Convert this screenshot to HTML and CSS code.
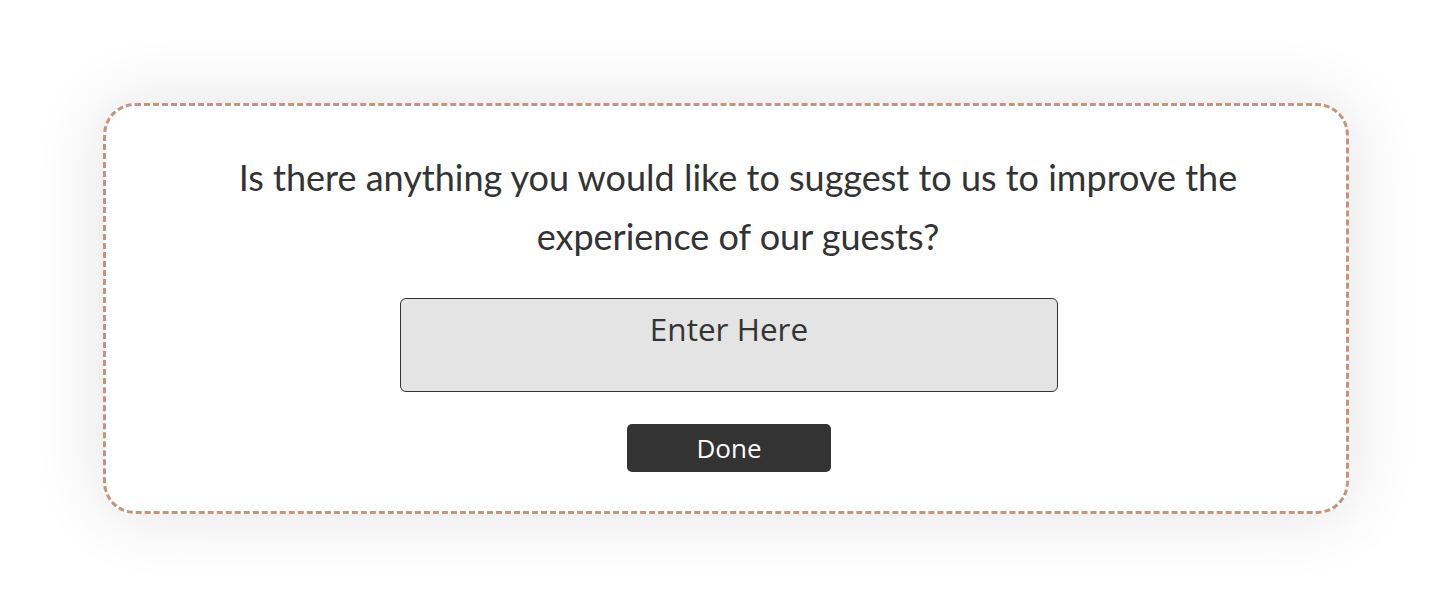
FILE: index.html
```html
<!DOCTYPE html>
<html lang="en">
<head>
<meta charset="utf-8">
<title>Suggestion</title>
<link rel="stylesheet" href="styles.css">
</head>
<body>
<main class="page">
  <section class="card">
    <h1 class="question">Is there anything you would like to suggest to us to improve the experience of our guests?</h1>
    <div class="field">
      <span class="placeholder">Enter Here</span>
    </div>
    <button class="done" type="button">Done</button>
  </section>
</main>
</body>
</html>
```

FILE: styles.css
```css
html, body {
  margin: 0;
  padding: 0;
  background: #ffffff;
}

.page {
  height: 616px;
  display: flex;
  align-items: center;
  justify-content: center;
}

.card {
  box-sizing: border-box;
  width: 1246px;
  height: 411px;
  border: 3px dashed #c4957c;
  border-radius: 32px;
  background: #ffffff;
  box-shadow: 0 0 70px rgba(0, 0, 0, 0.12);
  display: flex;
  flex-direction: column;
  align-items: center;
  padding-top: 42px;
  padding-left: 6px;
}

.question {
  margin: 0;
  max-width: 1040px;
  padding-left: 18px;
  text-align: center;
  font-family: Lato, "Open Sans", sans-serif;
  font-weight: 400;
  font-size: 36px;
  line-height: 59px;
  color: #333333;
}

.field {
  box-sizing: border-box;
  margin-top: 32px;
  width: 658px;
  height: 94px;
  background: #e4e4e4;
  border: 1px solid #333333;
  border-radius: 6px;
  display: flex;
  justify-content: center;
  padding-top: 9px;
}

.placeholder {
  font-family: "Open Sans", sans-serif;
  font-size: 31.5px;
  line-height: 42px;
  color: #333333;
}

.done {
  margin-top: 32px;
  width: 204px;
  height: 48px;
  border: none;
  border-radius: 5px;
  background: #333333;
  color: #ffffff;
  font-family: "Open Sans", sans-serif;
  font-size: 26px;
  line-height: 48px;
  padding: 0;
}
```
